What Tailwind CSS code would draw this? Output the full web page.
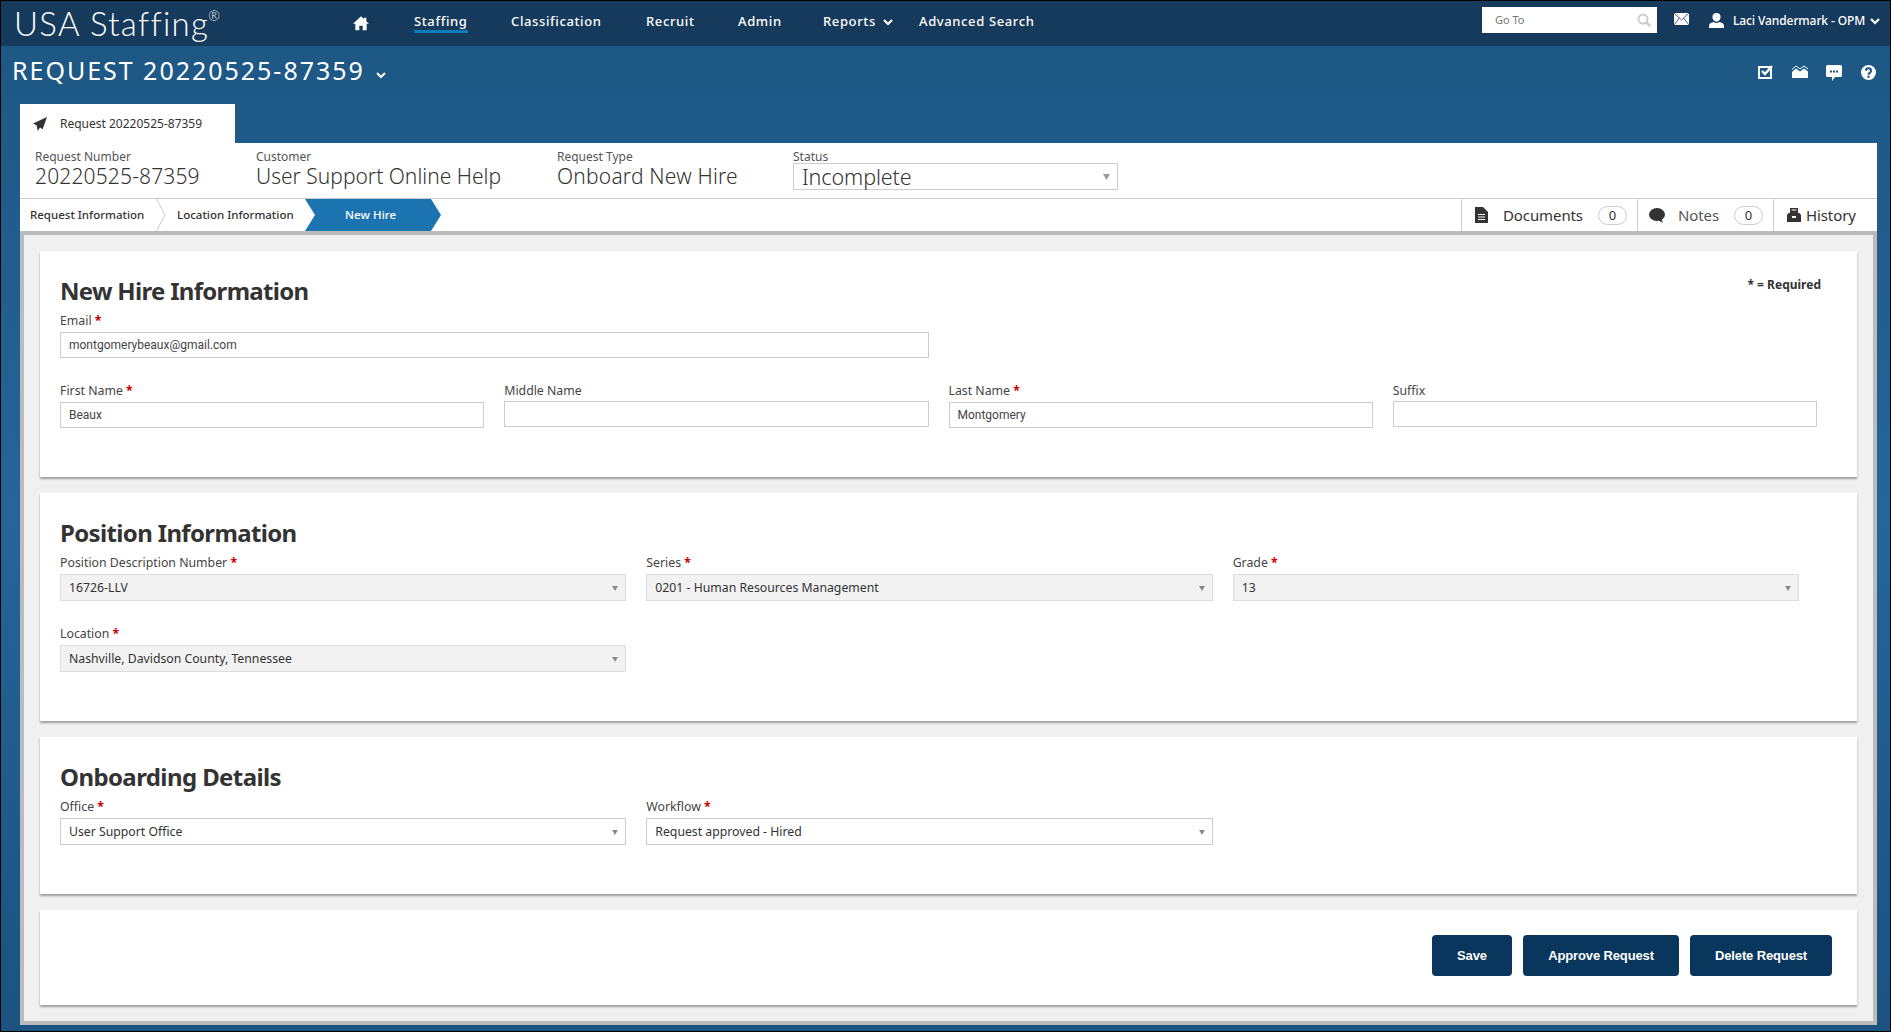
<!doctype html>
<html>
<head>
<meta charset="utf-8">
<title>Request 20220525-87359</title>
<script src="https://cdn.jsdelivr.net/npm/@tailwindcss/browser@4"></script>
</head>
<body class="font-['Noto_Sans',sans-serif] text-[#333]">
<div class="relative w-[1891px] h-[1032px] overflow-hidden bg-linear-to-b from-[#1d5682] via-[#25659a] to-[#1b5280]">
  <div class="absolute inset-0 border border-black pointer-events-none z-10"></div>

  <header class="h-[46px] bg-[#153a5c] flex text-white">
    <div class="w-[353px] pl-[14px] pt-[3px] text-[33px] leading-[40px] font-['Lato',sans-serif] font-light tracking-[1.3px] flex items-start">USA Staffing<span class="text-[14px] leading-[14px] mt-[6px] -ml-[1px] tracking-normal">®</span></div>
    <div class="w-[61px] pt-[15px]">
      <svg class="w-[16px] h-[16px]" viewBox="0 0 24 24" fill="#fff"><path d="M12 2 0 13h3.500v10h6v-7h5v7h6V13H24l-4-3.700V4h-3.500v2.100z"/></svg>
    </div>
    <nav class="flex text-[13px] font-medium leading-[18px] tracking-[0.62px]">
      <div class="w-[97px] pt-[12px]"><span class="inline-block border-b-[3px] border-[#0a7cba] h-[21px]">Staffing</span></div>
      <div class="w-[135px] pt-[12px]">Classification</div>
      <div class="w-[92px] pt-[12px]">Recruit</div>
      <div class="w-[85px] pt-[12px]">Admin</div>
      <div class="w-[96px] pt-[12px] flex items-start gap-[7px]">Reports
        <svg class="w-[10px] h-[7px] mt-[7px]" viewBox="0 0 10 7" fill="none" stroke="#fff" stroke-width="2.200"><path d="M1 1l4 4 4-4"/></svg>
      </div>
      <div class="w-[563px] pt-[12px]">Advanced Search</div>
    </nav>
    <div class="w-[175px] h-[26px] mt-[7px] bg-white flex items-center justify-between pl-[13px] pr-[6px] text-[11px] text-[#777]">
      <span>Go To</span>
      <svg class="w-[14px] h-[14px]" viewBox="0 0 14 14" fill="none" stroke="#ccc" stroke-width="2"><circle cx="6" cy="6" r="4.500"/><path d="M9.500 9.500 13 13" stroke-width="2.600"/></svg>
    </div>
    <svg class="w-[15px] h-[12px] mt-[13px] ml-[17px]" viewBox="0 0 15 12" fill="#fff" stroke="#153a5c" stroke-width="0.800"><rect x="0" y="0" width="15" height="12" stroke="none"/><path d="M0 0 7.500 7 15 0M0 12l5.500-7M15 12l-5.500-7" fill="none"/></svg>
    <svg class="w-[15px] h-[15px] mt-[13px] ml-[20px]" viewBox="0 0 24 24" fill="#fff"><path d="M12 0a6.500 6.500 0 0 1 6.500 6.500c0 3.500-2.800 7.500-6.500 7.500s-6.500-4-6.500-7.500A6.500 6.500 0 0 1 12 0zM0 24v-3.500c0-3.500 3.500-5 7.500-6 1.300 1 3 1.500 4.500 1.500s3.200-.5 4.500-1.500c4 1 7.500 2.500 7.500 6V24z"/></svg>
    <div class="ml-[9px] mt-[12px] w-[125px] text-[12px] leading-[18px] whitespace-nowrap font-medium tracking-[-0.1px]">Laci Vandermark - OPM</div>
    <svg class="w-[10px] h-[7px] mt-[18px] ml-[12px]" viewBox="0 0 10 7" fill="none" stroke="#fff" stroke-width="2.200"><path d="M1 1l4 4 4-4"/></svg>
  </header>

  <div class="h-[58px] flex text-white">
    <h1 class="pl-[12px] pt-[7px] text-[25px] leading-[34px] font-normal tracking-[1.98px] whitespace-nowrap">REQUEST 20220525-87359</h1>
    <svg class="w-[10px] h-[7px] mt-[26px] ml-[11px]" viewBox="0 0 10 7" fill="none" stroke="#fff" stroke-width="2"><path d="M1 1l4 4 4-4"/></svg>
    <div class="ml-auto flex pt-[19px] pr-[15px]">
      <svg class="w-[16px] h-[14px]" viewBox="0 0 16 14" fill="none" stroke="#fff"><rect x="1" y="2" width="12" height="11" stroke-width="2"/><path d="M4 6l3 3 7-8" stroke-width="2.400"/></svg>
      <svg class="w-[16px] h-[13px] ml-[18px]" viewBox="0 0 16 13" fill="#fff"><polygon points="0,7 4,3.500 8,6.500 12,3.500 16,6.500 16,13 0,13"/><polyline points="0,4.500 4,1 8,4 12,1 16,4" fill="none" stroke="#fff"/></svg>
      <svg class="w-[16px] h-[16px] ml-[18px]" viewBox="0 0 16 16"><path fill="#fff" d="M1.500 0h13A1.500 1.500 0 0 1 16 1.500v9a1.500 1.500 0 0 1-1.500 1.500H9l-3 4v-4H1.500A1.500 1.500 0 0 1 0 10.500v-9A1.500 1.500 0 0 1 1.500 0z"/><path fill="#1d5682" d="M4 5.500h2v2H4zM7 5.500h2v2H7zM10 5.500h2v2h-2z"/></svg>
      <svg class="w-[15px] h-[15px] ml-[19px]" viewBox="0 0 16 16"><circle cx="8" cy="8" r="8" fill="#fff"/><path fill="none" stroke="#1d5682" stroke-width="2.200" d="M5.200 6a2.800 2.600 0 1 1 4.300 2.200C8.500 8.900 8 9.300 8 10.500"/><rect x="6.800" y="11.500" width="2.400" height="2.200" fill="#1d5682"/></svg>
    </div>
  </div>

  <main class="ml-[20px] w-[1857px]">
    <div class="w-[215px] h-[39px] bg-white flex items-center pl-[13px] text-[12px]">
      <svg class="w-[14px] h-[14px] mr-[13px]" viewBox="0 0 24 24" fill="#333"><path d="M24 0 0 11l6.500 3.500L8 24l4-6 4.500 3z"/></svg>
      <span class="whitespace-nowrap">Request 20220525-87359</span>
    </div>

    <section class="bg-white">
      <div class="h-[55px] flex pl-[15px]">
        <div class="w-[221px] pt-[5px]">
          <div class="text-[12px] leading-[18px] text-[#555]">Request Number</div>
          <div class="text-[21px] leading-[26px] -mt-[3px] font-light whitespace-nowrap tracking-[0.15px]">20220525-87359</div>
        </div>
        <div class="w-[301px] pt-[5px]">
          <div class="text-[12px] leading-[18px] text-[#555]">Customer</div>
          <div class="text-[21px] leading-[26px] -mt-[3px] font-light whitespace-nowrap">User Support Online Help</div>
        </div>
        <div class="w-[236px] pt-[5px]">
          <div class="text-[12px] leading-[18px] text-[#555]">Request Type</div>
          <div class="text-[21px] leading-[26px] -mt-[3px] font-light whitespace-nowrap tracking-[0.2px]">Onboard New Hire</div>
        </div>
        <div class="w-[325px] pt-[6px]">
          <div class="text-[12px] leading-[16px] -mb-[2px] text-[#555]">Status</div>
          <div class="h-[27px] border border-[#ccc] flex items-center justify-between pl-[8px] pr-[7px] bg-white">
            <span class="text-[21.5px] leading-[24px] font-light tracking-[-0.1px]">Incomplete</span>
            <svg class="w-[7px] h-[6px]" viewBox="0 0 7 6" fill="#999"><path d="M0 0h7L3.500 6z"/></svg>
          </div>
        </div>
      </div>

      <div class="h-[33px] border-t border-[#ccc] flex text-[11.5px] font-medium text-[#333]">
        <div class="w-[136px] pl-[10px] leading-[32px] whitespace-nowrap">Request Information</div>
        <svg class="w-[10px] h-[32px] shrink-0" viewBox="0 0 10 32" fill="none" stroke="#ccc"><path d="M0.500 0 9 16 0.500 32"/></svg>
        <div class="w-[139px] pl-[11px] leading-[32px] whitespace-nowrap">Location Information</div>
        <div class="w-[136px] h-[32px] bg-[#1b74b0] text-white leading-[32px] pl-[40px] tracking-[0.1px] [clip-path:polygon(0_0,126px_0,136px_50%,126px_100%,0_100%,10px_50%)]">New Hire</div>
        <div class="ml-auto flex text-[15px] font-normal leading-[32px] h-[32px]">
          <div class="w-[176px] border-l border-[#ccc] flex items-center pl-[13px]">
            <svg class="w-[13px] h-[16px] mr-[15px]" viewBox="0 0 13 16"><path fill="#333" d="M0 0h8l5 5v11H0z"/><path stroke="#fff" d="M3 7.500h7M3 10h7M3 12.500h7"/></svg>
            <span class="tracking-[-0.1px]">Documents</span>
            <span class="ml-auto mr-[10px] w-[29px] h-[19px] rounded-full border border-[#ccc] flex items-center justify-center text-[13px]">0</span>
          </div>
          <div class="w-[136px] border-l border-[#ccc] flex items-center pl-[11px]">
            <svg class="w-[16px] h-[15px] mr-[13px]" viewBox="0 0 16 15" fill="#333"><ellipse cx="8" cy="6.500" rx="8" ry="6.500"/><path d="M9 12l5 3-2-5z"/></svg>
            <span class="text-[#555] tracking-[-0.1px]">Notes</span>
            <span class="ml-auto mr-[10px] w-[29px] h-[19px] rounded-full border border-[#ccc] flex items-center justify-center text-[13px]">0</span>
          </div>
          <div class="w-[104px] border-l border-[#ccc] flex items-center pl-[13px]">
            <svg class="w-[14px] h-[14px] mr-[5px]" viewBox="0 0 14 14" fill="#333"><path d="M3 0h8v5H3z"/><path fill="#fff" d="M4.500 1.500h5v1h-5z"/><path d="M1.500 5h11L14 7v7H0V7z"/><path fill="#fff" d="M5 8h4v2H5z"/></svg>
            <span class="tracking-[-0.1px]">History</span>
          </div>
        </div>
      </div>

      <div class="border-4 border-[#bbb] bg-[#f0f0f0] h-[794px] p-4 flex flex-col gap-4">

        <article class="h-[226px] bg-white shadow-[0_2px_2px_rgba(0,0,0,0.35)] pl-5 pr-10 pt-[24px]">
          <div class="flex justify-between h-[32px]">
            <h2 class="text-[24px] leading-[32px] font-bold tracking-[-0.7px]">New Hire Information</h2>
            <span class="text-[12px] leading-[18px] font-bold mt-[1px] -mr-[4px]">* = Required</span>
          </div>
          <div class="grid grid-cols-4 gap-x-5">
            <div class="col-span-2 mt-[5px]">
              <label class="block text-[12.3px] leading-[18px] mb-[2px] text-[#444]">Email <span class="text-[#c00] font-bold">*</span></label>
              <div class="h-[26px] border border-[#ccc] px-[8px] font-['Roboto',sans-serif] text-[12px] leading-[24px] text-[#444]">montgomerybeaux@gmail.com</div>
            </div>
            <div class="col-span-2"></div>
            <div class="mt-[24px]">
              <label class="block text-[12.3px] leading-[18px] mb-[2px] text-[#444]">First Name <span class="text-[#c00] font-bold">*</span></label>
              <div class="h-[26px] border border-[#ccc] px-[8px] font-['Roboto',sans-serif] text-[12px] leading-[24px] text-[#444]">Beaux</div>
            </div>
            <div class="mt-[24px]">
              <label class="block text-[12.3px] leading-[18px] mb-[1px] text-[#444]">Middle Name</label>
              <div class="h-[26px] border border-[#ccc]"></div>
            </div>
            <div class="mt-[24px]">
              <label class="block text-[12.3px] leading-[18px] mb-[2px] text-[#444]">Last Name <span class="text-[#c00] font-bold">*</span></label>
              <div class="h-[26px] border border-[#ccc] px-[8px] font-['Roboto',sans-serif] text-[12px] leading-[24px] text-[#444]">Montgomery</div>
            </div>
            <div class="mt-[24px]">
              <label class="block text-[12.3px] leading-[18px] mb-[1px] text-[#444]">Suffix</label>
              <div class="h-[26px] border border-[#ccc]"></div>
            </div>
          </div>
        </article>

        <article class="h-[228px] bg-white shadow-[0_2px_2px_rgba(0,0,0,0.35)] pl-5 pr-[58px] pt-[24px]">
          <h2 class="text-[24px] leading-[32px] font-bold tracking-[-0.65px]">Position Information</h2>
          <div class="grid grid-cols-3 gap-x-5">
            <div class="mt-[5px]">
              <label class="block text-[12.3px] leading-[18px] mb-[2px] text-[#444]">Position Description Number <span class="text-[#c00] font-bold">*</span></label>
              <div class="h-[27px] border border-[#ddd] bg-[#f2f2f2] flex items-center justify-between pt-[2px] pl-[8px] pr-[7px] text-[12.25px]"><span>16726-LLV</span><svg class="w-[6px] h-[5px]" viewBox="0 0 7 6" fill="#888"><path d="M0 0h7L3.500 6z"/></svg></div>
            </div>
            <div class="mt-[5px]">
              <label class="block text-[12.3px] leading-[18px] mb-[2px] text-[#444]">Series <span class="text-[#c00] font-bold">*</span></label>
              <div class="h-[27px] border border-[#ddd] bg-[#f2f2f2] flex items-center justify-between pt-[2px] pl-[8px] pr-[7px] text-[12.25px]"><span>0201 - Human Resources Management</span><svg class="w-[6px] h-[5px]" viewBox="0 0 7 6" fill="#888"><path d="M0 0h7L3.500 6z"/></svg></div>
            </div>
            <div class="mt-[5px]">
              <label class="block text-[12.3px] leading-[18px] mb-[2px] text-[#444]">Grade <span class="text-[#c00] font-bold">*</span></label>
              <div class="h-[27px] border border-[#ddd] bg-[#f2f2f2] flex items-center justify-between pt-[2px] pl-[8px] pr-[7px] text-[12.25px]"><span>13</span><svg class="w-[6px] h-[5px]" viewBox="0 0 7 6" fill="#888"><path d="M0 0h7L3.500 6z"/></svg></div>
            </div>
            <div class="mt-[24px]">
              <label class="block text-[12.3px] leading-[18px] mb-[2px] text-[#444]">Location <span class="text-[#c00] font-bold">*</span></label>
              <div class="h-[27px] border border-[#ddd] bg-[#f2f2f2] flex items-center justify-between pt-[2px] pl-[8px] pr-[7px] text-[12.25px]"><span>Nashville, Davidson County, Tennessee</span><svg class="w-[6px] h-[5px]" viewBox="0 0 7 6" fill="#888"><path d="M0 0h7L3.500 6z"/></svg></div>
            </div>
          </div>
        </article>

        <article class="h-[157px] bg-white shadow-[0_2px_2px_rgba(0,0,0,0.35)] pl-5 pr-[58px] pt-[24px]">
          <h2 class="text-[24px] leading-[32px] font-bold tracking-[-0.6px]">Onboarding Details</h2>
          <div class="grid grid-cols-3 gap-x-5">
            <div class="mt-[5px]">
              <label class="block text-[12.3px] leading-[18px] mb-[2px] text-[#444]">Office <span class="text-[#c00] font-bold">*</span></label>
              <div class="h-[27px] border border-[#ccc] bg-white flex items-center justify-between pt-[2px] pl-[8px] pr-[7px] text-[12.25px]"><span>User Support Office</span><svg class="w-[6px] h-[5px]" viewBox="0 0 7 6" fill="#888"><path d="M0 0h7L3.500 6z"/></svg></div>
            </div>
            <div class="mt-[5px]">
              <label class="block text-[12.3px] leading-[18px] mb-[2px] text-[#444]">Workflow <span class="text-[#c00] font-bold">*</span></label>
              <div class="h-[27px] border border-[#ccc] bg-white flex items-center justify-between pt-[2px] pl-[8px] pr-[7px] text-[12.25px]"><span>Request approved - Hired</span><svg class="w-[6px] h-[5px]" viewBox="0 0 7 6" fill="#888"><path d="M0 0h7L3.500 6z"/></svg></div>
            </div>
          </div>
        </article>

        <article class="h-[95px] bg-white shadow-[0_2px_2px_rgba(0,0,0,0.35)] flex justify-end items-start gap-[11px] pt-[25px] pr-[25px] font-['Liberation_Sans',sans-serif] font-bold text-[13px] tracking-[-0.13px] text-white">
          <button class="w-[80px] h-[41px] rounded-[4px] bg-[#08365c]">Save</button>
          <button class="w-[156px] h-[41px] rounded-[4px] bg-[#08365c]">Approve Request</button>
          <button class="w-[142px] h-[41px] rounded-[4px] bg-[#08365c]">Delete Request</button>
        </article>
      </div>
    </section>
  </main>
</div>
</body>
</html>
